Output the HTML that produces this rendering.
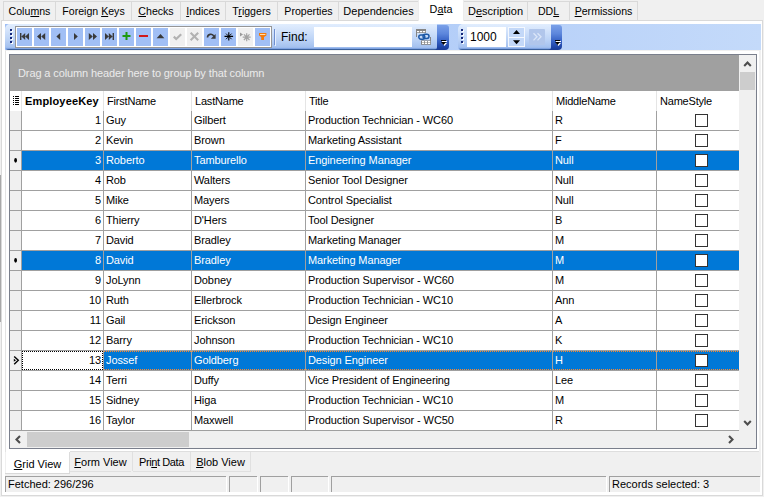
<!DOCTYPE html>
<html><head><meta charset="utf-8">
<style>
html,body{margin:0;padding:0;}
body{width:764px;height:497px;overflow:hidden;background:#f0f0f0;font-family:"Liberation Sans",sans-serif;font-size:11px;color:#000;position:relative;}
.abs{position:absolute;}
u{text-decoration:underline;}
/* top tabs */
.tab{position:absolute;top:1px;height:19px;box-sizing:border-box;border:1px solid #d9d9d9;border-bottom:none;background:#f0f0f0;line-height:19px;text-align:center;white-space:nowrap;font-size:10.6px;}
.tab.act{top:0;height:21px;background:#fff;line-height:18px;z-index:3;border-top:none;border-color:#ececec;font-size:10.8px;}
.outer{position:absolute;left:1px;top:20px;width:762px;height:476px;box-sizing:border-box;background:#fff;border:1px solid #d9d9d9;}
.stat{position:absolute;left:5px;top:473px;width:756px;height:1px;background:#e4e4e4;}
.inner{position:absolute;left:5px;top:50px;width:756px;height:442px;background:#f0f0f0;}
.page{position:absolute;left:5px;top:50px;width:754px;height:402px;background:#fff;box-sizing:border-box;border-left:1px solid #e3e3e3;border-top:1px solid #f0f0f0;}
.tb{position:absolute;left:5px;top:24px;width:756px;height:26px;background:linear-gradient(90deg,#9ebef5,#c4dafa);}
.tbgrp{position:absolute;top:24px;height:26px;border-radius:5px 0 3px 4px;background:linear-gradient(#e1edfe 0,#d3e3fb 25%,#bcd3f6 60%,#a3c0ef 90%,#86a9e4 92.5%,#7a9fe0 96.1%,#3b619c 96.2%,#3b619c 100%);}
.tbend{position:absolute;top:25px;height:25px;width:15px;border-radius:0 3px 4px 0;background:linear-gradient(#7aa0e8 0,#5c86dc 35%,#3560c4 65%,#1d43a4 90%,#1a3b93 100%);}
.grip{position:absolute;width:3px;height:15px;}
.grip i{position:absolute;left:0;width:2px;height:2px;background:#15287a;box-shadow:1px 1px 0 #fff;}
.navbox{position:absolute;left:15px;top:26px;width:257px;height:22px;box-sizing:border-box;border:1px solid #969696;background:#fff;}
.btn{position:absolute;top:28px;width:15px;height:18px;background:#a1bff5;}
.btn.off{background:#f0f0f0;}
.btn svg{position:absolute;left:0;top:0;}
.grid{position:absolute;left:9px;top:54px;width:748px;height:395px;box-sizing:border-box;border:1px solid #7a7f8c;background:#fff;overflow:hidden;}
.grp{position:absolute;left:0;top:0;width:729px;height:36px;background:#a0a0a0;color:#ebebeb;line-height:36px;letter-spacing:-0.115px;}
.grp span{position:absolute;left:8px;top:0;}
.row{position:absolute;left:0;width:729px;height:20px;line-height:19px;white-space:nowrap;letter-spacing:-0.1px;}
.row.hd{letter-spacing:-0.2px;}
.row.sel{background:#0078d7;color:#fff;}
.c{position:absolute;top:0;height:20px;box-sizing:border-box;border-right:1px solid #a0a0a0;border-bottom:1px solid #a0a0a0;padding-left:2px;overflow:hidden;}
.hd .c{border-right:1px solid #e5e5e5;border-bottom:none;padding-left:3px;line-height:21px;}
.hd .c0{padding:0 !important;}
.hd .c0 svg{position:absolute;left:0;top:0;}
.c0{left:0;width:12px;background:#f0f0f0;padding:0;}
.hd .c0{background:#fff;}
.c1{left:12px;width:82px;text-align:right;padding-right:2px;}
.hd .c1{text-align:left;font-weight:bold;letter-spacing:0.15px;}
.c2{left:94px;width:88px;}
.c3{left:182px;width:114px;}
.c4{left:296px;width:247px;}
.c5{left:543px;width:104px;}
.c6{left:647px;width:82px;border-right:none !important;}
.row.cur .c1{background:#fff;color:#000;}
.fh{position:absolute;height:1px;}
.fv{position:absolute;width:1px;}
.fw{background:repeating-linear-gradient(90deg,#000 0,#000 1px,#fff 1px,#fff 2px);}
.fwv{background:repeating-linear-gradient(180deg,#000 0,#000 1px,#fff 1px,#fff 2px);}
.fo{background:repeating-linear-gradient(90deg,#ff8728 0,#ff8728 1px,#0078d7 1px,#0078d7 2px);}
.cb{position:absolute;left:38px;top:3px;width:11px;height:11px;border:1px solid #333;background:#fff;}
.vsb{position:absolute;left:729px;top:0;width:17px;height:376px;background:#f0f0f0;}
.hsb{position:absolute;left:0;top:376px;width:746px;height:17px;background:#f0f0f0;}
.thumb{position:absolute;background:#cdcdcd;}
.btab{position:absolute;top:452px;height:20px;box-sizing:border-box;border:1px solid #e0e0e0;border-top:none;border-left:none;background:#f0f0f0;line-height:21px;text-align:center;white-space:nowrap;font-size:11px;}
.btab.act{top:450px;height:23px;background:#fff;line-height:29px;z-index:3;border:none;}
.sp{position:absolute;top:476px;height:16px;box-sizing:border-box;border:1px solid #a0a0a0;border-right:none;border-bottom:none;box-shadow:1px 1px 0 #fff;line-height:15px;padding-left:2px;white-space:nowrap;}
</style></head><body>

<div class="outer"></div>
<div class="abs" style="left:0;top:175px;width:1px;height:147px;background:#a8a8a8"></div>

<!-- top tabs -->
<div class="tab" style="left:3px;width:53px;">Colu<u>m</u>ns</div>
<div class="tab" style="left:55px;width:77px;">Foreign <u>K</u>eys</div>
<div class="tab" style="left:131px;width:50px;"><u>C</u>hecks</div>
<div class="tab" style="left:180px;width:46px;"><u>I</u>ndices</div>
<div class="tab" style="left:225px;width:53px;">T<u>r</u>iggers</div>
<div class="tab" style="left:277px;width:63px;">Properties</div>
<div class="tab" style="left:338px;width:81px;font-size:11px">Dependencies</div>
<div class="tab act" style="left:418px;width:46px;">D<u>a</u>ta</div>
<div class="tab" style="left:463px;width:65px;font-size:11px">D<u>e</u>scription</div>
<div class="tab" style="left:527px;width:43px;">DD<u>L</u></div>
<div class="tab" style="left:569px;width:69px;"><u>P</u>ermissions</div>

<div class="stat"></div>
<div class="inner"></div>
<div class="page"></div>
<div class="abs" style="left:70px;top:451px;width:689px;height:1px;background:#dedede"></div>

<!-- toolbar -->
<div class="tb"></div>
<div class="tbend" style="left:434px;"></div>
<div class="tbgrp" style="left:5px;width:432px;"></div>
<div class="tbend" style="left:547px;"></div>
<div class="tbgrp" style="left:458px;width:93px;"></div>
<svg class="abs" style="left:416px;top:29px" width="16" height="16" viewBox="0 0 16 16"><rect x="0" y="0" width="10" height="4" fill="#858585"/><rect x="0" y="4" width="1" height="4" fill="#858585"/><path d="M1 2.600h2.200M4 2.600h2.200M7 2.600h2.200" stroke="#fff" stroke-width="1.200"/><rect x="5" y="11.400" width="10" height="4.400" fill="#858585"/><rect x="14" y="8" width="1" height="4" fill="#858585"/><path d="M6 12.600h2.200M9 12.600h2.200M12 12.600h2.200M6 14.400h2.200M9 14.400h2.200M12 14.400h2.200" stroke="#fff" stroke-width="1.100"/><rect x="2.800" y="6" width="6" height="4.200" rx="2.100" fill="none" stroke="#1d58a6" stroke-width="1.500"/><rect x="7" y="5.200" width="6" height="4.200" rx="2.100" fill="none" stroke="#1d58a6" stroke-width="1.500"/></svg>
<svg class="abs" style="left:440px;top:38px" width="9" height="10" viewBox="0 0 9 10"><path d="M2 3.500h5" stroke="#fff"/><path d="M2 5h5l-2.500 3z" fill="#fff"/><path d="M1 2.500h5" stroke="#000"/><path d="M1 4h5l-2.500 3z" fill="#000"/></svg>
<svg class="abs" style="left:554px;top:38px" width="9" height="10" viewBox="0 0 9 10"><path d="M2 3.500h5" stroke="#fff"/><path d="M2 5h5l-2.500 3z" fill="#fff"/><path d="M1 2.500h5" stroke="#000"/><path d="M1 4h5l-2.500 3z" fill="#000"/></svg>
<div class="grip" style="left:10px;top:29px"><i style="top:0"></i><i style="top:4px"></i><i style="top:8px"></i><i style="top:12px"></i></div>
<div class="grip" style="left:461px;top:29px"><i style="top:0"></i><i style="top:4px"></i><i style="top:8px"></i><i style="top:12px"></i></div>
<div class="navbox"></div>
<div class="btn" style="left:17px"><svg width="15" height="18" viewBox="0 0 15 18"><path d="M3 5h1.4v7H3z M4.4 8.5 L8.2 5v7z M8.2 8.5 L12 5v7z" fill="#3a3a3a"/></svg></div>
<div class="btn" style="left:34px"><svg width="15" height="18" viewBox="0 0 15 18"><path d="M3 8.5 L7 5v7z M7.2 8.5 L11.2 5v7z" fill="#3a3a3a"/></svg></div>
<div class="btn" style="left:51px"><svg width="15" height="18" viewBox="0 0 15 18"><path d="M5.4 8.5 L9.2 5v7z" fill="#3a3a3a"/></svg></div>
<div class="btn" style="left:68px"><svg width="15" height="18" viewBox="0 0 15 18"><path d="M9.8 8.5 L6 5v7z" fill="#3a3a3a"/></svg></div>
<div class="btn" style="left:85px"><svg width="15" height="18" viewBox="0 0 15 18"><path d="M7.8 8.5 L3.8 5v7z M12 8.5 L8 5v7z" fill="#3a3a3a"/></svg></div>
<div class="btn" style="left:102px"><svg width="15" height="18" viewBox="0 0 15 18"><path d="M10.6 5h1.4v7h-1.4z M6.800 8.5 L3 5v7z M10.6 8.5 L6.800 5v7z" fill="#3a3a3a"/></svg></div>
<div class="btn" style="left:119px"><svg width="15" height="18" viewBox="0 0 15 18"><path d="M6.5 4h2v3h3v2h-3v3h-2v-3h-3v-2h3z" fill="#1f9a10"/></svg></div>
<div class="btn" style="left:136px"><svg width="15" height="18" viewBox="0 0 15 18"><path d="M3 7h9v2h-9z" fill="#d01818"/></svg></div>
<div class="btn" style="left:153px"><svg width="15" height="18" viewBox="0 0 15 18"><path d="M3.600 10.2 L7.500 6 L11.4 10.2z" fill="#3a3a3a"/></svg></div>
<div class="btn off" style="left:170px"><svg width="15" height="18" viewBox="0 0 15 18"><path d="M3.800 8.600 L6.200 11 L11.200 6.200" fill="none" stroke="#b2b2b2" stroke-width="2.200"/></svg></div>
<div class="btn off" style="left:187px"><svg width="15" height="18" viewBox="0 0 15 18"><path d="M3.600 4.800 L11.200 12.200 M11.200 4.800 L3.600 12.200" fill="none" stroke="#b2b2b2" stroke-width="2.100"/></svg></div>
<div class="btn" style="left:204px"><svg width="15" height="18" viewBox="0 0 15 18"><path d="M3.500 9.500 C3.500 6 8.500 5 10 8.500" fill="none" stroke="#3a3a3a" stroke-width="1.600"/><path d="M6.800 10.800 L11.600 10.800 L11.600 6 z" fill="#3a3a3a"/></svg></div>
<div class="btn" style="left:221px"><svg width="15" height="18" viewBox="0 0 15 18"><path d="M7.800 4.200v8.400M3.500 8.400h8.600" stroke="#000" stroke-width="1.100" fill="none"/><path d="M5 5.600l5.600 5.600M10.600 5.600l-5.600 5.600" stroke="#000" stroke-width="0.900" fill="none"/></svg></div>
<div class="btn off" style="left:238px"><svg width="15" height="18" viewBox="0 0 15 18"><path d="M8.700 5.200v8M4.700 9.200h8M5.900 6.400l5.600 5.600M11.500 6.400l-5.600 5.600" stroke="#a4a4a4" stroke-width="1.200" fill="none"/><path d="M2 4.400v4l3-2z" fill="#9a9a9a"/></svg></div>
<div class="btn" style="left:255px"><svg width="15" height="18" viewBox="0 0 15 18"><path d="M4 5h7.400v2.400l-2.400 1.600v3h-2.800V9L4 7.400z" fill="#f57a0a"/><path d="M5 6.500h5.400" stroke="#ffe0b0" stroke-width="1"/></svg></div>
<div class="abs" style="left:274px;top:29px;width:1px;height:16px;background:#6f8fd0;box-shadow:1px 1px 0 #e8f0fd"></div>
<div class="abs" style="left:281px;top:28px;height:18px;line-height:18px;font-size:12px;">Find:</div>
<div class="abs" style="left:314px;top:27px;width:98px;height:20px;background:#fff;"></div>
<div class="abs" style="left:467px;top:27px;width:39px;height:20px;background:#fff;font-size:12px;line-height:20px;"><span style="margin-left:3px">1000</span></div>
<div class="abs" style="left:508px;top:27px;width:17px;height:20px;box-sizing:border-box;border:1px solid #f4f8fe;background:#c3d8f8;"></div>
<div class="abs" style="left:508px;top:37px;width:17px;height:1px;background:#f4f8fe;"></div>
<svg class="abs" style="left:508px;top:27px" width="17" height="20" viewBox="0 0 17 20"><path d="M5 7 L8.500 3 L12 7 Z" fill="#000"/><path d="M5 13.200 L8.500 17.200 L12 13.200 Z" fill="#000"/></svg>
<div class="abs" style="left:529px;top:29px;width:16px;height:16px;background:#b1c6eb;border-radius:1px;"><svg width="16" height="16" viewBox="0 0 16 16"><path d="M4.500 4.200 L8 7.800 L4.500 11.400 M8.500 4.200 L12 7.800 L8.500 11.400" fill="none" stroke="#dbe6f8" stroke-width="1.300"/></svg></div>

<div class="grid">
  <div class="grp"><span>Drag a column header here to group by that column</span></div>
  <div class="row hd" style="top:36px"><div class="c c0"><svg width="12" height="20" viewBox="0 0 12 20"><path d="M3 5.500h1M5 5.500h4M3 7.500h1M5 7.500h4M3 9.500h1M5 9.500h4M3 11.500h1M5 11.500h4M3 13.500h1M5 13.500h4" stroke="#000" stroke-width="1"/></svg></div><div class="c c1">EmployeeKey</div><div class="c c2">FirstName</div><div class="c c3">LastName</div><div class="c c4">Title</div><div class="c c5">MiddleName</div><div class="c c6">NameStyle</div></div>
  <div class="row" style="top:56px"><div class="c c0"></div><div class="c c1">1</div><div class="c c2">Guy</div><div class="c c3">Gilbert</div><div class="c c4">Production Technician - WC60</div><div class="c c5">R</div><div class="c c6"><i class="cb"></i></div></div>
  <div class="row" style="top:76px"><div class="c c0"></div><div class="c c1">2</div><div class="c c2">Kevin</div><div class="c c3">Brown</div><div class="c c4">Marketing Assistant</div><div class="c c5">F</div><div class="c c6"><i class="cb"></i></div></div>
  <div class="row sel" style="top:96px"><div class="c c0"><svg width="12" height="19" viewBox="0 0 12 19"><ellipse cx="5.6" cy="9.3" rx="1.4" ry="2.4" fill="#000"/></svg></div><div class="c c1">3</div><div class="c c2">Roberto</div><div class="c c3">Tamburello</div><div class="c c4">Engineering Manager</div><div class="c c5">Null</div><div class="c c6"><i class="cb"></i></div></div>
  <div class="row" style="top:116px"><div class="c c0"></div><div class="c c1">4</div><div class="c c2">Rob</div><div class="c c3">Walters</div><div class="c c4">Senior Tool Designer</div><div class="c c5">Null</div><div class="c c6"><i class="cb"></i></div></div>
  <div class="row" style="top:136px"><div class="c c0"></div><div class="c c1">5</div><div class="c c2">Mike</div><div class="c c3">Mayers</div><div class="c c4">Control Specialist</div><div class="c c5">Null</div><div class="c c6"><i class="cb"></i></div></div>
  <div class="row" style="top:156px"><div class="c c0"></div><div class="c c1">6</div><div class="c c2">Thierry</div><div class="c c3">D'Hers</div><div class="c c4">Tool Designer</div><div class="c c5">B</div><div class="c c6"><i class="cb"></i></div></div>
  <div class="row" style="top:176px"><div class="c c0"></div><div class="c c1">7</div><div class="c c2">David</div><div class="c c3">Bradley</div><div class="c c4">Marketing Manager</div><div class="c c5">M</div><div class="c c6"><i class="cb"></i></div></div>
  <div class="row sel" style="top:196px"><div class="c c0"><svg width="12" height="19" viewBox="0 0 12 19"><ellipse cx="5.6" cy="9.3" rx="1.4" ry="2.4" fill="#000"/></svg></div><div class="c c1">8</div><div class="c c2">David</div><div class="c c3">Bradley</div><div class="c c4">Marketing Manager</div><div class="c c5">M</div><div class="c c6"><i class="cb"></i></div></div>
  <div class="row" style="top:216px"><div class="c c0"></div><div class="c c1">9</div><div class="c c2">JoLynn</div><div class="c c3">Dobney</div><div class="c c4">Production Supervisor - WC60</div><div class="c c5">M</div><div class="c c6"><i class="cb"></i></div></div>
  <div class="row" style="top:236px"><div class="c c0"></div><div class="c c1">10</div><div class="c c2">Ruth</div><div class="c c3">Ellerbrock</div><div class="c c4">Production Technician - WC10</div><div class="c c5">Ann</div><div class="c c6"><i class="cb"></i></div></div>
  <div class="row" style="top:256px"><div class="c c0"></div><div class="c c1">11</div><div class="c c2">Gail</div><div class="c c3">Erickson</div><div class="c c4">Design Engineer</div><div class="c c5">A</div><div class="c c6"><i class="cb"></i></div></div>
  <div class="row" style="top:276px"><div class="c c0"></div><div class="c c1">12</div><div class="c c2">Barry</div><div class="c c3">Johnson</div><div class="c c4">Production Technician - WC10</div><div class="c c5">K</div><div class="c c6"><i class="cb"></i></div></div>
  <div class="row sel cur" style="top:296px"><div class="c c0"><svg width="12" height="19" viewBox="0 0 12 19"><path d="M4.200 5.400 L8.300 9.300 L4.200 13.200" fill="none" stroke="#000" stroke-width="1.400"/><path d="M3.800 7.800 L6 9.300 L3.800 10.800z" fill="#000"/></svg></div><div class="c c1">13</div><div class="c c2">Jossef</div><div class="c c3">Goldberg</div><div class="c c4">Design Engineer</div><div class="c c5">H</div><div class="c c6"><i class="cb"></i></div><i class="fh fw" style="left:12px;top:0;width:81px"></i><i class="fh fw" style="left:12px;top:18px;width:81px"></i><i class="fv fwv" style="left:12px;top:0;height:19px"></i><i class="fv fwv" style="left:92px;top:0;height:19px"></i><i class="fh fo" style="left:94px;top:0;width:87px"></i><i class="fh fo" style="left:94px;top:18px;width:87px"></i><i class="fh fo" style="left:182px;top:0;width:113px"></i><i class="fh fo" style="left:182px;top:18px;width:113px"></i><i class="fh fo" style="left:296px;top:0;width:246px"></i><i class="fh fo" style="left:296px;top:18px;width:246px"></i><i class="fh fo" style="left:543px;top:0;width:103px"></i><i class="fh fo" style="left:543px;top:18px;width:103px"></i><i class="fh fo" style="left:647px;top:0;width:82px"></i><i class="fh fo" style="left:647px;top:18px;width:82px"></i></div>
  <div class="row" style="top:316px"><div class="c c0"></div><div class="c c1">14</div><div class="c c2">Terri</div><div class="c c3">Duffy</div><div class="c c4">Vice President of Engineering</div><div class="c c5">Lee</div><div class="c c6"><i class="cb"></i></div></div>
  <div class="row" style="top:336px"><div class="c c0"></div><div class="c c1">15</div><div class="c c2">Sidney</div><div class="c c3">Higa</div><div class="c c4">Production Technician - WC10</div><div class="c c5">M</div><div class="c c6"><i class="cb"></i></div></div>
  <div class="row" style="top:356px"><div class="c c0"></div><div class="c c1">16</div><div class="c c2">Taylor</div><div class="c c3">Maxwell</div><div class="c c4">Production Supervisor - WC50</div><div class="c c5">R</div><div class="c c6"><i class="cb"></i></div></div>
  <div class="vsb">
    <svg class="abs" style="left:0;top:0" width="17" height="17" viewBox="0 0 17 17"><path d="M5.2 10.9 L8.5 7.6 L11.8 10.9" fill="none" stroke="#4d4d4d" stroke-width="2.1"/></svg>
    <div class="thumb" style="left:1px;top:17px;width:15px;height:18px"></div>
    <svg class="abs" style="left:0;top:359px" width="17" height="17" viewBox="0 0 17 17"><path d="M5.2 7.1 L8.5 10.4 L11.8 7.1" fill="none" stroke="#4d4d4d" stroke-width="2.1"/></svg>
  </div>
  <div class="hsb">
    <svg class="abs" style="left:0;top:0" width="17" height="17" viewBox="0 0 17 17"><path d="M10 5 L6.5 8.5 L10 12" fill="none" stroke="#4d4d4d" stroke-width="2.1"/></svg>
    <div class="thumb" style="left:17px;top:1px;width:162px;height:15px"></div>
    <svg class="abs" style="left:712px;top:0" width="17" height="17" viewBox="0 0 17 17"><path d="M7 5 L10.5 8.5 L7 12" fill="none" stroke="#4d4d4d" stroke-width="2.1"/></svg>
  </div>
</div>

<!-- bottom tabs -->
<div class="btab act" style="left:6px;width:63px;"><u>G</u>rid View<i class="abs" style="left:63px;top:2px;width:1px;height:21px;background:#dcdcdc"></i><i class="abs" style="left:-1px;top:23px;width:65px;height:1px;background:#d8d8d8"></i></div>
<div class="btab" style="left:70px;width:61px;border-right:none;"><i class="abs" style="left:62px;top:0;width:1px;height:19px;background:#e0e0e0"></i><u>F</u>orm View</div>
<div class="btab" style="left:133px;width:58px;letter-spacing:-0.4px">Pri<u>n</u>t Data</div>
<div class="btab" style="left:191px;width:60px;"><u>B</u>lob View</div>

<!-- status bar -->
<div class="sp" style="left:5px;width:221px;">Fetched: 296/296</div>
<div class="sp" style="left:229px;width:28px;"></div>
<div class="sp" style="left:260px;width:28px;"></div>
<div class="sp" style="left:291px;width:37px;"></div>
<div class="sp" style="left:331px;width:275px;"></div>
<div class="sp" style="left:609px;width:151px;">Records selected: 3</div>

</body></html>
